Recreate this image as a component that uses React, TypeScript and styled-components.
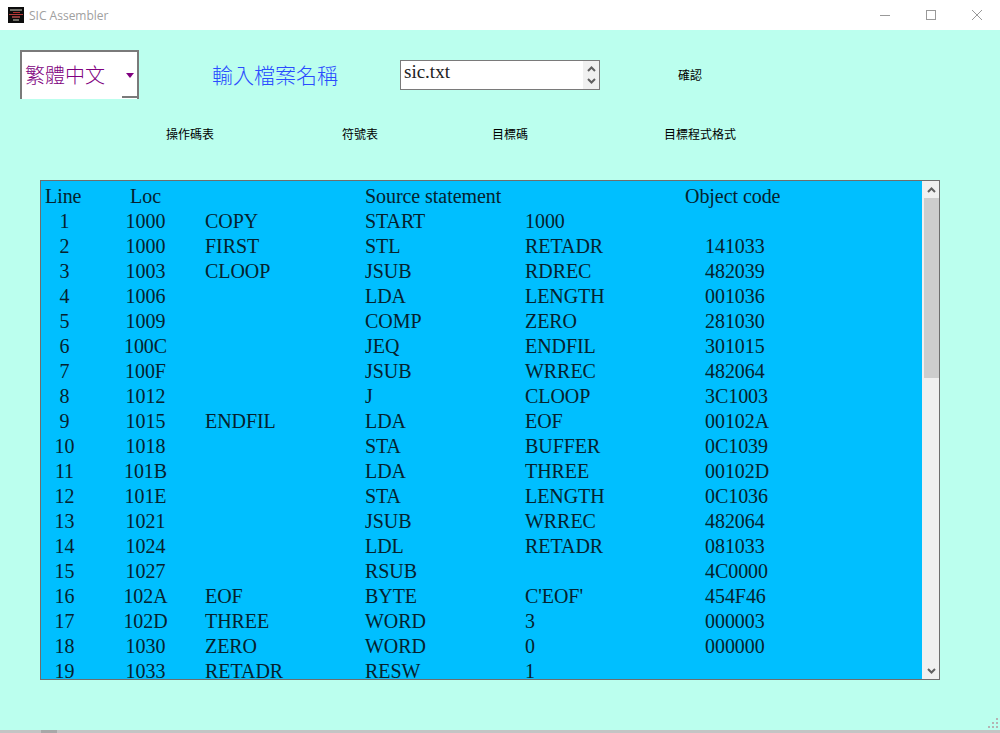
import React from "react";
import styled, { createGlobalStyle } from "styled-components";

const GlobalStyle = createGlobalStyle`
  html, body {
    margin: 0;
    padding: 0;
    height: 100%;
    overflow: hidden;
    background: #bbffee;
  }
`;

const cjk = `"Noto Sans CJK TC", "Liberation Sans", sans-serif`;
const serif = `"Liberation Serif", "Noto Sans CJK TC", serif`;

const Window = styled.div`
  position: relative;
  width: 1000px;
  height: 733px;
  display: flex;
  flex-direction: column;
  background: #bbffee;
  overflow: hidden;
`;

const TitleBar = styled.div`
  height: 30px;
  flex: none;
  background: #fff;
  display: flex;
  align-items: center;
  padding-left: 8px;
`;

const AppName = styled.span`
  margin-left: 5px;
  font: 12px "Open Sans", "Liberation Sans", sans-serif;
  color: #a0a0a0;
`;

const WindowControls = styled.div`
  margin-left: auto;
  display: flex;
`;

const ControlButton = styled.div`
  width: 46px;
  height: 30px;
  display: flex;
  align-items: center;
  justify-content: center;
  svg {
    display: block;
  }
`;

const Content = styled.div`
  flex: 1;
  display: flex;
  flex-direction: column;
  padding: 20px 0 0 20px;
`;

const TopRow = styled.div`
  display: flex;
  align-items: center;
  height: 49px;
`;

const LangSelect = styled.div`
  position: relative;
  box-sizing: border-box;
  width: 119px;
  height: 49px;
  background: #fff;
  border-top: 2px solid #7a7a7a;
  border-left: 2px solid #7a7a7a;
  border-right: 2px solid #7a7a7a;
  display: flex;
  align-items: center;
  padding: 0 0 3px 3px;
  font: 300 20px ${cjk};
  color: #800080;
  &::after {
    content: "";
    position: absolute;
    right: 0;
    bottom: 1px;
    width: 15px;
    height: 2px;
    background: #7a7a7a;
  }
`;

const Caret = styled.span`
  position: absolute;
  right: 3px;
  top: 21px;
  width: 0;
  height: 0;
  border-left: 4px solid transparent;
  border-right: 4px solid transparent;
  border-top: 5px solid #800080;
`;

const FileLabel = styled.div`
  margin-left: 73px;
  width: 126px;
  font: 300 21px/1 ${cjk};
  color: #2a4cff;
  white-space: nowrap;
`;

const FileInput = styled.div`
  margin-left: 62px;
  box-sizing: border-box;
  width: 200px;
  height: 30px;
  border: 1px solid #7a7a7a;
  background: #fff;
  display: flex;
  justify-content: space-between;
  font: 19px/20px ${serif};
  color: #222;
`;

const FileName = styled.span`
  padding: 1px 0 0 3px;
`;

const Spinner = styled.div`
  width: 16px;
  background: #f0f0f0;
  display: flex;
  flex-direction: column;
  align-items: center;
  justify-content: space-around;
  padding: 2px 0;
`;

const FlatButton = styled.div<{ $width?: number }>`
  width: ${(p) => p.$width ?? 100}px;
  height: 20px;
  font: 12px/20px ${cjk};
  color: #000;
  text-align: center;
  white-space: nowrap;
`;

const ConfirmButton = styled(FlatButton)`
  margin-left: 40px;
`;

const ButtonRow = styled.div`
  display: flex;
  margin: 25px 0 0 120px;
`;

const Listing = styled.div`
  margin: 36px 0 0 20px;
  box-sizing: border-box;
  width: 900px;
  height: 500px;
  border: 1px solid #6e6e6e;
  background: #00bfff;
  display: flex;
  overflow: hidden;
`;

const ListingBody = styled.div`
  flex: 1;
  padding: 3px 0 0 4px;
  overflow: hidden;
  font: 20px/25px ${serif};
  letter-spacing: -0.06px;
  color: #06222e;
`;

const HeadRow = styled.div`
  display: grid;
  grid-template-columns: 36px 124px 160px 320px 1fr;
  height: 25px;
`;

const Row = styled.div`
  display: grid;
  grid-template-columns: 36px 124px 160px 160px 180px 1fr;
  height: 25px;
  white-space: pre;
`;

const LineHead = styled.span`
  text-align: center;
`;

const LineCell = styled.span`
  text-align: center;
  margin-left: 3px;
`;

const LocCell = styled.span`
  text-align: center;
  margin-left: 5px;
`;

const Cell = styled.span``;

const Scrollbar = styled.div`
  width: 17px;
  flex: none;
  border-left: 1px solid #f0f0f0;
  background: #f0f0f0;
  display: flex;
  flex-direction: column;
  align-items: center;
  box-sizing: border-box;
`;

const ArrowBox = styled.div`
  height: 17px;
  flex: none;
  display: flex;
  align-items: center;
  justify-content: center;
`;

const Thumb = styled.div`
  width: 15px;
  height: 180px;
  background: #cdcdcd;
  flex: none;
`;

const Track = styled.div`
  flex: 1;
`;

const BottomEdge = styled.div`
  height: 3px;
  flex: none;
  background: #c4c4c4;
  padding-left: 41px;
`;

const EdgeMark = styled.div`
  width: 16px;
  height: 3px;
  background: #a8a8a8;
`;

const Grip = styled.svg`
  position: absolute;
  right: 1px;
  bottom: 4px;
`;

const Chevron = ({ up }: { up?: boolean }) => (
  <svg width="9" height="6" viewBox="0 0 9 6">
    <path
      d={up ? "M1 5L4.5 1.5L8 5" : "M1 1L4.5 4.5L8 1"}
      fill="none"
      stroke="#606060"
      strokeWidth="2"
    />
  </svg>
);

const AppIcon = () => (
  <svg width="16" height="16" viewBox="0 0 16 16">
    <rect width="16" height="16" fill="#0c0c0c" />
    <rect x="2" y="2" width="12" height="2" fill="#6f6f66" />
    <rect x="5" y="5" width="7" height="1" fill="#b03030" />
    <rect x="1" y="7" width="14" height="1" fill="#b83a3a" />
    <rect x="4" y="9" width="8" height="2" fill="#8a3a3a" />
    <rect x="5" y="12" width="6" height="2" fill="#6f6f66" />
  </svg>
);

type Line = [string, string, string, string, string, string];

const lines: Line[] = [
  ["1", "1000", "COPY", "START", "1000", ""],
  ["2", "1000", "FIRST", "STL", "RETADR", "141033"],
  ["3", "1003", "CLOOP", "JSUB", "RDREC", "482039"],
  ["4", "1006", "", "LDA", "LENGTH", "001036"],
  ["5", "1009", "", "COMP", "ZERO", "281030"],
  ["6", "100C", "", "JEQ", "ENDFIL", "301015"],
  ["7", "100F", "", "JSUB", "WRREC", "482064"],
  ["8", "1012", "", "J", "CLOOP", "3C1003"],
  ["9", "1015", "ENDFIL", "LDA", "EOF", "00102A"],
  ["10", "1018", "", "STA", "BUFFER", "0C1039"],
  ["11", "101B", "", "LDA", "THREE", "00102D"],
  ["12", "101E", "", "STA", "LENGTH", "0C1036"],
  ["13", "1021", "", "JSUB", "WRREC", "482064"],
  ["14", "1024", "", "LDL", "RETADR", "081033"],
  ["15", "1027", "", "RSUB", "", "4C0000"],
  ["16", "102A", "EOF", "BYTE", "C'EOF'", "454F46"],
  ["17", "102D", "THREE", "WORD", "3", "000003"],
  ["18", "1030", "ZERO", "WORD", "0", "000000"],
  ["19", "1033", "RETADR", "RESW", "1", ""],
];

const App = () => {
  return (
    <Window>
      <GlobalStyle />
      <TitleBar>
        <AppIcon />
        <AppName>SIC Assembler</AppName>
        <WindowControls>
          <ControlButton>
            <svg width="10" height="10" viewBox="0 0 10 10">
              <path d="M0 5.5H10" stroke="#999" />
            </svg>
          </ControlButton>
          <ControlButton>
            <svg width="10" height="10" viewBox="0 0 10 10">
              <rect x="0.5" y="0.5" width="9" height="9" fill="none" stroke="#999" />
            </svg>
          </ControlButton>
          <ControlButton>
            <svg width="10" height="10" viewBox="0 0 10 10">
              <path d="M0 0L10 10M10 0L0 10" stroke="#999" />
            </svg>
          </ControlButton>
        </WindowControls>
      </TitleBar>
      <Content>
        <TopRow>
          <LangSelect>
            繁體中文
            <Caret />
          </LangSelect>
          <FileLabel>輸入檔案名稱</FileLabel>
          <FileInput>
            <FileName>sic.txt</FileName>
            <Spinner>
              <Chevron up />
              <Chevron />
            </Spinner>
          </FileInput>
          <ConfirmButton>確認</ConfirmButton>
        </TopRow>
        <ButtonRow>
          <FlatButton>操作碼表</FlatButton>
          <FlatButton $width={240}>符號表</FlatButton>
          <FlatButton $width={60}>目標碼</FlatButton>
          <FlatButton $width={320}>目標程式格式</FlatButton>
        </ButtonRow>
        <Listing>
          <ListingBody>
            <HeadRow>
              <LineHead>Line</LineHead>
              <LocCell>Loc</LocCell>
              <Cell />
              <Cell>Source statement</Cell>
              <Cell>Object code</Cell>
            </HeadRow>
            {lines.map(([no, loc, label, op, operand, code]) => (
              <Row key={no}>
                <LineCell>{no}</LineCell>
                <LocCell>{loc}</LocCell>
                <Cell>{label}</Cell>
                <Cell>{op}</Cell>
                <Cell>{operand}</Cell>
                <Cell>{code}</Cell>
              </Row>
            ))}
          </ListingBody>
          <Scrollbar>
            <ArrowBox>
              <Chevron up />
            </ArrowBox>
            <Thumb />
            <Track />
            <ArrowBox>
              <Chevron />
            </ArrowBox>
          </Scrollbar>
        </Listing>
      </Content>
      <BottomEdge>
        <EdgeMark />
      </BottomEdge>
      <Grip width="11" height="11" viewBox="0 0 11 11">
        <g fill="#b4b4b4">
          <rect x="8" y="0" width="2" height="2" />
          <rect x="4" y="4" width="2" height="2" />
          <rect x="8" y="4" width="2" height="2" />
          <rect x="0" y="8" width="2" height="2" />
          <rect x="4" y="8" width="2" height="2" />
          <rect x="8" y="8" width="2" height="2" />
        </g>
      </Grip>
    </Window>
  );
};

export default App;
